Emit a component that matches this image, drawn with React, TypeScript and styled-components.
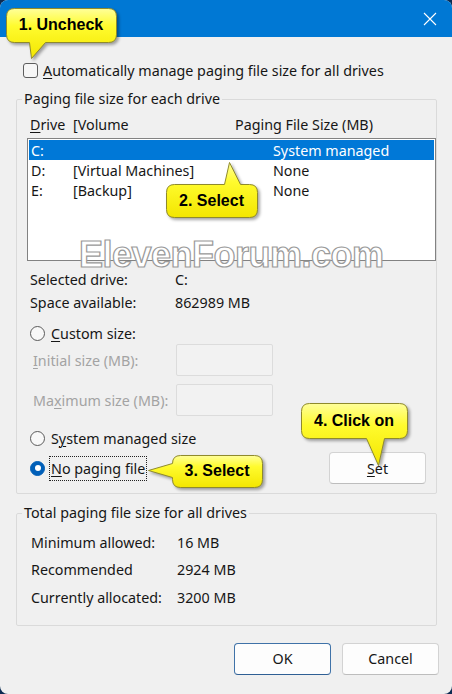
import React from 'react';
import styled, { createGlobalStyle } from 'styled-components';

const Global = createGlobalStyle`
  html, body { margin: 0; padding: 0; background: #0c2b52; }
  body { width: 452px; height: 694px; overflow: hidden; }
  #root { width: 452px; height: 694px; }
`;

const Window = styled.div`
  position: relative;
  width: 452px;
  height: 694px;
  background: #f0f0f0;
  border-radius: 8px;
  overflow: hidden;
  display: flex;
  flex-direction: column;
  font-family: "Noto Sans", "Open Sans", sans-serif;
  font-size: 14.3px;
  color: #161616;
`;

const TitleBar = styled.div`
  height: 37px;
  flex: none;
  background: #0078d4;
  display: flex;
  align-items: center;
  justify-content: flex-end;
  padding-right: 15px;
`;

const Body = styled.div`
  display: flex;
  flex-direction: column;
  padding: 0 15px 0 16px;
`;

const Key = styled.u`
  text-decoration: underline;
  text-underline-offset: 2px;
  text-decoration-thickness: 1px;
`;

const CheckRow = styled.div`
  margin-top: 23px;
  height: 20px;
  display: flex;
  align-items: center;
  gap: 5px;
  padding-left: 7px;
`;

const CheckBox = styled.span`
  width: 15px;
  height: 15px;
  box-sizing: border-box;
  border: 1px solid #5d5d5d;
  border-radius: 3px;
  background: #f6f6f6;
`;

const GroupBox = styled.fieldset<{ $pad: string; $mt: number }>`
  margin: ${p => p.$mt}px 0 0 0;
  padding: ${p => p.$pad};
  border: 1px solid #dadada;
  border-radius: 2px;
  min-width: 0;
  display: flex;
  flex-direction: column;
`;

const Legend = styled.legend<{ $ml: number }>`
  margin-left: ${p => p.$ml}px;
  padding: 0 2px;
  line-height: 20px;
`;

const HeaderRow = styled.div`
  margin-top: 5px;
  height: 20px;
  display: grid;
  grid-template-columns: 43px 162px auto;
  align-items: center;
  padding-left: 3px;
`;

const ListBox = styled.div`
  margin-top: 4px;
  height: 123px;
  box-sizing: border-box;
  border: 1px solid #828282;
  background: #ffffff;
  padding: 1px;
`;

const ListRow = styled.div<{ $selected?: boolean }>`
  height: 20px;
  display: grid;
  grid-template-columns: 42px 200px auto;
  align-items: center;
  padding-left: 2px;
  background: ${p => (p.$selected ? '#0078d7' : 'transparent')};
  color: ${p => (p.$selected ? '#ffffff' : '#161616')};
`;

const InfoBlock = styled.div`
  margin-top: 7px;
  display: flex;
  flex-direction: column;
`;

const InfoRow = styled.div<{ $h: number; $label: number; $pl: number }>`
  height: ${p => p.$h}px;
  display: grid;
  grid-template-columns: ${p => p.$label}px auto;
  align-items: center;
  padding-left: ${p => p.$pl}px;
  line-height: 18px;
`;

const RadioRow = styled.div<{ $mt: number }>`
  margin-top: ${p => p.$mt}px;
  height: 22px;
  display: flex;
  align-items: center;
  gap: 4px;
  padding-left: 3px;
`;

const RadioDot = styled.span<{ $on?: boolean }>`
  width: 15px;
  height: 15px;
  box-sizing: border-box;
  border-radius: 50%;
  border: 1px solid ${p => (p.$on ? '#005fb8' : '#5a5a5a')};
  background: ${p => (p.$on ? '#005fb8' : '#f8f8f8')};
  display: flex;
  align-items: center;
  justify-content: center;
  &::after {
    content: '';
    display: ${p => (p.$on ? 'block' : 'none')};
    width: 6px;
    height: 6px;
    border-radius: 50%;
    background: #ffffff;
  }
`;

const RadioLabel = styled.span<{ $focus?: boolean }>`
  display: inline-block;
  line-height: 23px;
  padding: 0 1px;
  border: 1px ${p => (p.$focus ? 'dotted #222' : 'solid transparent')};
`;

const SizeRow = styled.div<{ $mt: number }>`
  margin-top: ${p => p.$mt}px;
  height: 32px;
  display: grid;
  grid-template-columns: 143px 97px;
  align-items: center;
  padding-left: 6px;
  color: #a3a3a3;
`;

const SizeInput = styled.div`
  height: 32px;
  box-sizing: border-box;
  border: 1px solid #dcdcdc;
  border-radius: 2px;
  background: #f2f2f2;
`;

const BottomRow = styled.div`
  margin-top: 3px;
  height: 32px;
  display: flex;
  align-items: center;
  justify-content: space-between;
  padding-right: 10px;
`;

const Button = styled.div<{ $default?: boolean }>`
  width: 97px;
  height: 32px;
  box-sizing: border-box;
  display: flex;
  align-items: center;
  justify-content: center;
  background: #fdfdfd;
  border: 1px solid ${p => (p.$default ? '#3f72a8' : '#d3d3d3')};
  border-bottom-color: ${p => (p.$default ? '#2f5f94' : '#bdbdbd')};
  border-radius: 4px;
  color: #161616;
`;

const DialogButtons = styled.div`
  margin-top: 17px;
  margin-right: -2px;
  display: flex;
  justify-content: flex-end;
  gap: 11px;
`;

const Watermark = styled.div`
  position: absolute;
  left: 79px;
  top: 243px;
  line-height: 24px;
  height: 24px;
  font-family: "Liberation Sans", Arial, sans-serif;
  font-weight: 700;
  font-size: 36px;
  letter-spacing: -0.5px;
  color: #ffffff;
  -webkit-text-stroke: 1.2px #9a9a9a;
  pointer-events: none;
  white-space: nowrap;
`;

const CalloutWrap = styled.div`
  position: absolute;
  pointer-events: none;
`;

const CalloutSvg = styled.svg`
  position: absolute;
  left: 0;
  top: 0;
  overflow: visible;
  filter: drop-shadow(2px 2px 1.5px rgba(0, 0, 0, 0.35));
`;

const CalloutText = styled.div`
  position: absolute;
  display: flex;
  align-items: center;
  justify-content: center;
  font-family: "Liberation Sans", Arial, sans-serif;
  font-weight: 700;
  font-size: 16px;
  color: #000000;
  white-space: nowrap;
`;

type Side = 'top' | 'bottom' | 'left';

function Callout(props: {
  id: string;
  x: number; y: number; w: number; h: number;
  side: Side; base: [number, number]; tip: [number, number];
  text: string;
}) {
  const { id, x, y, w, h, side, base, tip, text } = props;
  const r = 8;
  const minX = Math.min(x, tip[0]) - 2;
  const minY = Math.min(y, tip[1]) - 2;
  const maxX = Math.max(x + w, tip[0]) + 5;
  const maxY = Math.max(y + h, tip[1]) + 5;
  const X = x - minX + 0.5;
  const Y = y - minY + 0.5;
  const tx = tip[0] - minX + 0.5;
  const ty = tip[1] - minY + 0.5;
  const b1 = base[0] - (side === 'left' ? minY : minX) + 0.5;
  const b2 = base[1] - (side === 'left' ? minY : minX) + 0.5;
  let d = `M ${X + r} ${Y} `;
  if (side === 'top') d += `L ${b1} ${Y} L ${tx} ${ty} L ${b2} ${Y} `;
  d += `L ${X + w - r} ${Y} Q ${X + w} ${Y} ${X + w} ${Y + r} `;
  d += `L ${X + w} ${Y + h - r} Q ${X + w} ${Y + h} ${X + w - r} ${Y + h} `;
  if (side === 'bottom') d += `L ${b2} ${Y + h} L ${tx} ${ty} L ${b1} ${Y + h} `;
  d += `L ${X + r} ${Y + h} Q ${X} ${Y + h} ${X} ${Y + h - r} `;
  if (side === 'left') d += `L ${X} ${b2} L ${tx} ${ty} L ${X} ${b1} `;
  d += `L ${X} ${Y + r} Q ${X} ${Y} ${X + r} ${Y} Z`;
  const W = maxX - minX;
  const H = maxY - minY;
  return (
    <CalloutWrap style={{ left: minX, top: minY, width: W, height: H }}>
      <CalloutSvg width={W} height={H} viewBox={`0 0 ${W} ${H}`}>
        <defs>
          <linearGradient id={id} x1="0" y1="0" x2="0" y2="1">
            <stop offset="0" stopColor="#ffff9a" />
            <stop offset="0.35" stopColor="#fffb2e" />
            <stop offset="1" stopColor="#f3e600" />
          </linearGradient>
        </defs>
        <path d={d} fill={`url(#${id})`} stroke="#8f8a2c" strokeWidth="1" strokeLinejoin="round" />
      </CalloutSvg>
      <CalloutText style={{ left: x - minX, top: y - minY, width: w, height: h }}>{text}</CalloutText>
    </CalloutWrap>
  );
}

export default function App() {
  return (
    <>
      <Global />
      <Window>
        <TitleBar>
          <svg width="14" height="14" viewBox="0 0 14 14">
            <path d="M1 1 L13 13 M13 1 L1 13" stroke="#ffffff" strokeWidth="1.1" />
          </svg>
        </TitleBar>
        <Body>
          <CheckRow>
            <CheckBox />
            <span><Key>A</Key>utomatically manage paging file size for all drives</span>
          </CheckRow>

          <GroupBox $mt={9} $pad="0 0 9px 10px">
            <Legend $ml={-5}>Paging file size for each drive</Legend>
            <HeaderRow>
              <span><Key>D</Key>rive</span>
              <span>[Volume</span>
              <span>Paging File Size (MB)</span>
            </HeaderRow>
            <ListBox>
              <ListRow $selected>
                <span>C:</span>
                <span></span>
                <span>System managed</span>
              </ListRow>
              <ListRow>
                <span>D:</span>
                <span>[Virtual Machines]</span>
                <span>None</span>
              </ListRow>
              <ListRow>
                <span>E:</span>
                <span>[Backup]</span>
                <span>None</span>
              </ListRow>
            </ListBox>
            <InfoBlock>
              <InfoRow $h={23} $label={145} $pl={3}>
                <span>Selected drive:</span>
                <span>C:</span>
              </InfoRow>
              <InfoRow $h={23} $label={145} $pl={3}>
                <span>Space available:</span>
                <span>862989 MB</span>
              </InfoRow>
            </InfoBlock>
            <RadioRow $mt={8}>
              <RadioDot />
              <RadioLabel><Key>C</Key>ustom size:</RadioLabel>
            </RadioRow>
            <SizeRow $mt={0}>
              <span><Key>I</Key>nitial size (MB):</span>
              <SizeInput />
            </SizeRow>
            <SizeRow $mt={8}>
              <span>Ma<Key>x</Key>imum size (MB):</span>
              <SizeInput />
            </SizeRow>
            <RadioRow $mt={11}>
              <RadioDot />
              <RadioLabel>S<Key>y</Key>stem managed size</RadioLabel>
            </RadioRow>
            <BottomRow>
              <RadioRow $mt={0}>
                <RadioDot $on />
                <RadioLabel $focus><Key>N</Key>o paging file</RadioLabel>
              </RadioRow>
              <Button><span><Key>S</Key>et</span></Button>
            </BottomRow>
          </GroupBox>

          <GroupBox $mt={9} $pad="6px 0 13px 14px">
            <Legend $ml={-9}>Total paging file size for all drives</Legend>
            <InfoRow $h={27.5} $label={146} $pl={0}>
              <span>Minimum allowed:</span>
              <span>16 MB</span>
            </InfoRow>
            <InfoRow $h={27.5} $label={146} $pl={0}>
              <span>Recommended</span>
              <span>2924 MB</span>
            </InfoRow>
            <InfoRow $h={27.5} $label={146} $pl={0}>
              <span>Currently allocated:</span>
              <span>3200 MB</span>
            </InfoRow>
          </GroupBox>

          <DialogButtons>
            <Button $default>OK</Button>
            <Button>Cancel</Button>
          </DialogButtons>
        </Body>

        <Watermark>ElevenForum.com</Watermark>

        <Callout id="c1" x={6} y={8} w={110} h={34} side="bottom" base={[29, 45]} tip={[31, 58]} text="1. Uncheck" />
        <Callout id="c2" x={166} y={184} w={91} h={33} side="top" base={[224, 240]} tip={[229, 162]} text="2. Select" />
        <Callout id="c3" x={172} y={455} w={90} h={32} side="left" base={[463, 477]} tip={[148, 470]} text="3. Select" />
        <Callout id="c4" x={301} y={403} w={106} h={35} side="bottom" base={[366, 384]} tip={[378, 465]} text="4. Click on" />
      </Window>
    </>
  );
}
